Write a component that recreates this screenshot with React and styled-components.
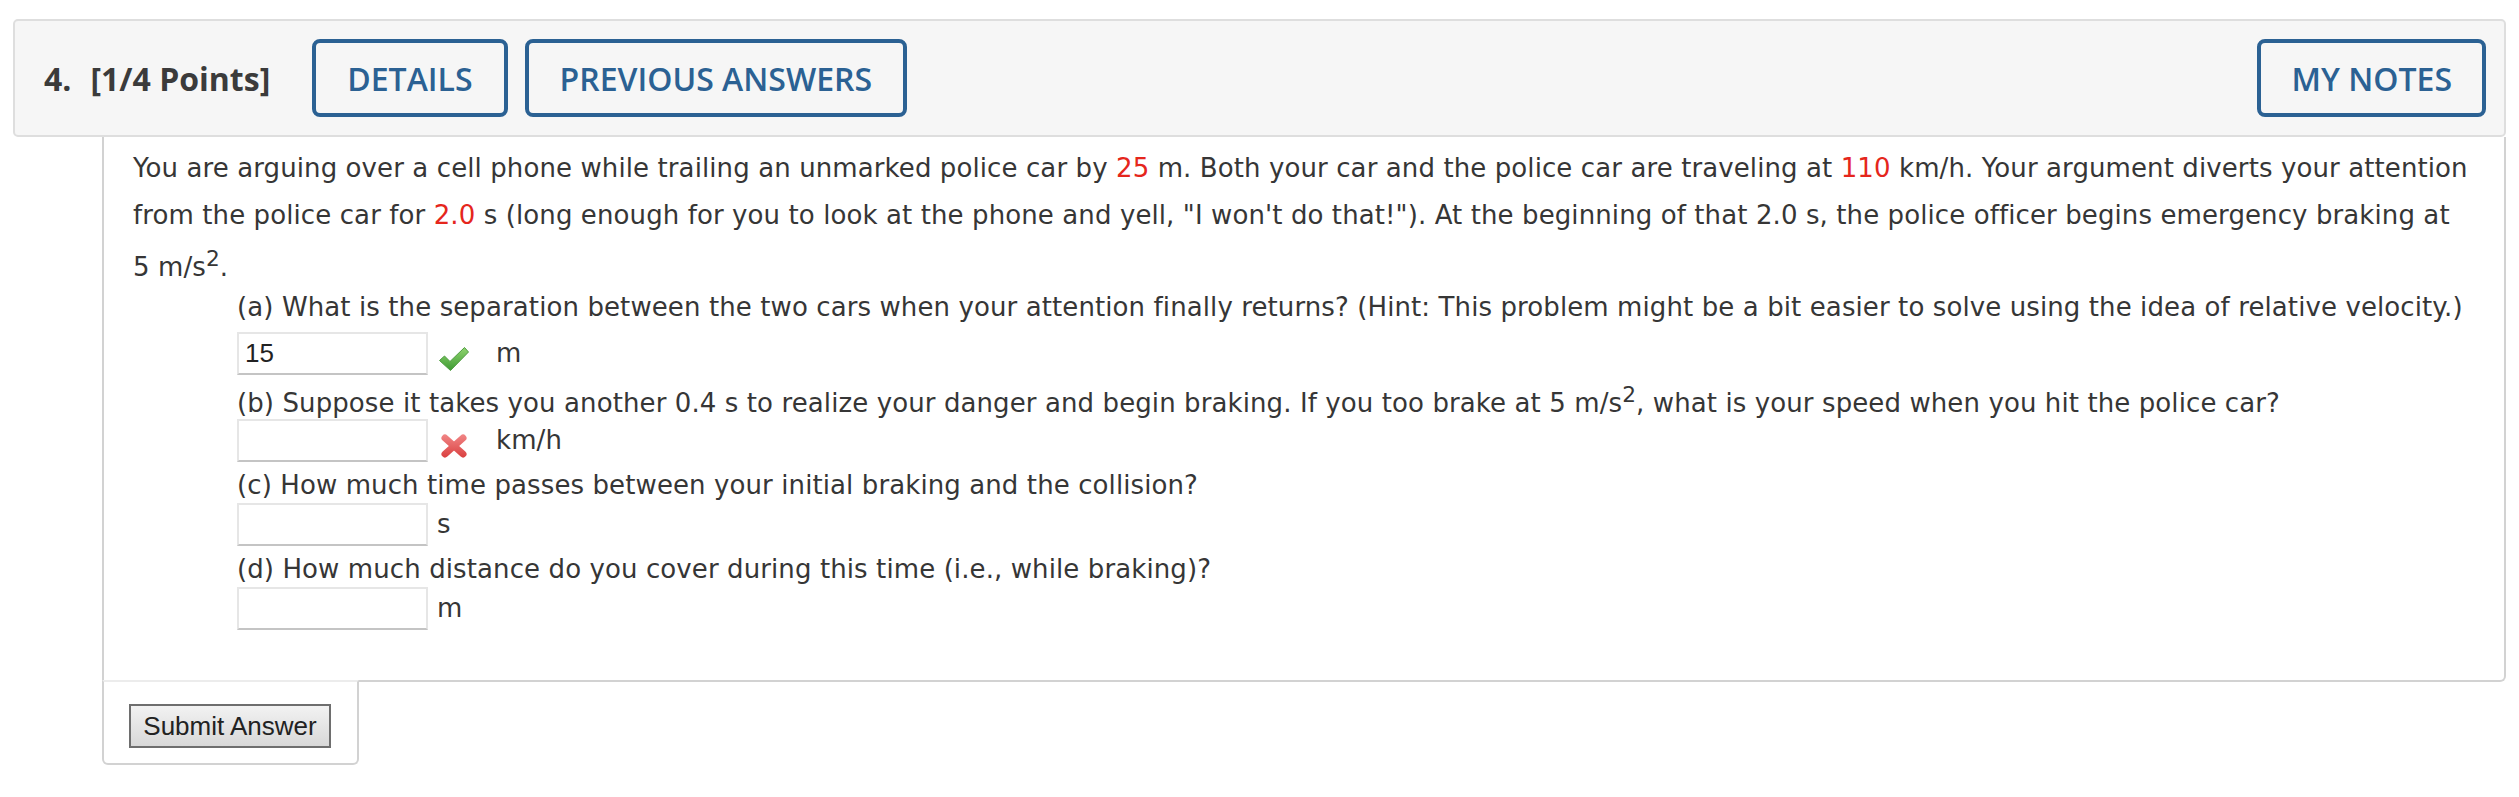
import React from 'react';
import styled, { createGlobalStyle } from 'styled-components';

const GlobalStyle = createGlobalStyle`
  html, body {
    margin: 0;
    padding: 0;
    background: #ffffff;
  }
  body {
    font-family: "DejaVu Sans", Verdana, sans-serif;
    color: #363636;
  }
`;

const Page = styled.div`
  padding: 19px 13px 0 13px;
`;

const Header = styled.div`
  display: flex;
  align-items: center;
  height: 118px;
  box-sizing: border-box;
  padding: 0 18px 0 29px;
  background: #f6f6f6;
  border: 2px solid #dedede;
  border-radius: 5px;
  font-family: "Open Sans", "Liberation Sans", sans-serif;
`;

const QNum = styled.span`
  font-size: 32px;
  font-weight: 700;
  color: #3b3b3b;
  margin-right: 19px;
`;

const Points = styled.span`
  font-size: 32px;
  font-weight: 700;
  color: #3b3b3b;
  margin-right: 42px;
`;

const HeaderButton = styled.button`
  height: 78px;
  box-sizing: border-box;
  padding: 0 ${(p) => p.$pad || 31}px;
  margin-right: ${(p) => p.$gap || 0}px;
  border: 4px solid #2b6193;
  border-radius: 8px;
  background: transparent;
  color: #2b6193;
  font-family: "Open Sans", "Liberation Sans", sans-serif;
  font-size: 32px;
  font-weight: 600;
  cursor: pointer;
`;

const Spacer = styled.div`
  flex: 1;
`;

const Body = styled.div`
  margin-left: 89px;
  border: 2px solid #d2d2d2;
  border-top: none;
  border-radius: 0 0 6px 0;
  padding: 8px 30px 50px 29px;
  font-size: 26px;
  letter-spacing: 0.1px;
`;

const Paragraph = styled.p`
  margin: 0;
  line-height: 1.8;
`;

const Red = styled.span`
  color: #e5261c;
`;

const Parts = styled.div`
  margin: 2px 0 0 104px;
`;

const Part = styled.div`
  margin-bottom: ${(p) => p.$after || 0}px;
`;

const PartText = styled.div`
  line-height: 1.2;
`;

const AnswerRow = styled.div`
  display: flex;
  align-items: center;
  height: 43px;
  margin-top: ${(p) => p.$top ?? 2}px;
  line-height: 1.2;
`;

const AnswerInput = styled.input`
  width: 191px;
  height: 43px;
  box-sizing: border-box;
  margin: 0;
  padding: 0 6px;
  border: 2px solid #e6e6e6;
  border-bottom-color: #c4c4c4;
  border-radius: 0;
  background: #fff;
  font-family: "Liberation Sans", Arial, sans-serif;
  font-size: 26px;
  color: #222;
  outline: none;
`;

const IconBox = styled.span`
  display: inline-flex;
  width: 32px;
  height: 26px;
  margin: 11px 26px 0 10px;
  align-items: center;
  justify-content: center;
`;

const Unit = styled.span`
  margin-left: ${(p) => (p.$afterIcon ? 0 : 9)}px;
`;

const SubmitBox = styled.div`
  margin: -2px 0 0 89px;
  width: 257px;
  box-sizing: border-box;
  border: 2px solid #d2d2d2;
  border-top-color: #ececec;
  border-radius: 0 0 6px 6px;
  padding: 22px 0 15px 25px;
`;

const SubmitButton = styled.button`
  width: 202px;
  height: 44px;
  box-sizing: border-box;
  padding: 0;
  border: 2px solid #6e6e6e;
  border-radius: 0;
  background: linear-gradient(#f2f2f2, #d8d8d8);
  color: #222;
  font-family: "Liberation Sans", Arial, sans-serif;
  font-size: 26px;
  cursor: pointer;
`;

const CheckIcon = () => (
  <svg width="32" height="26" viewBox="0 0 32 26">
    <defs>
      <linearGradient id="chk" x1="0" y1="0" x2="0" y2="1">
        <stop offset="0" stopColor="#8fd46f" />
        <stop offset="1" stopColor="#3e9a33" />
      </linearGradient>
    </defs>
    <path
      d="M1.5 14.5 L6.5 10 L12 15.5 L26.5 1.5 L30.5 6 L12.5 24.5 Z"
      fill="url(#chk)"
      stroke="#4f9d41"
      strokeWidth="1"
      strokeLinejoin="round"
    />
  </svg>
);

const CrossIcon = () => (
  <svg width="28" height="26" viewBox="0 0 28 26">
    <defs>
      <linearGradient id="crs" x1="0" y1="0" x2="0" y2="26" gradientUnits="userSpaceOnUse">
        <stop offset="0" stopColor="#f28a8a" />
        <stop offset="1" stopColor="#d93c3c" />
      </linearGradient>
    </defs>
    <g stroke="url(#crs)" strokeWidth="7" strokeLinecap="round">
      <line x1="5" y1="5" x2="23" y2="21" />
      <line x1="23" y1="5" x2="5" y2="21" />
    </g>
  </svg>
);

export default function App() {
  return (
    <>
      <GlobalStyle />
      <Page>
        <Header>
          <QNum>4.</QNum>
          <Points>[1/4 Points]</Points>
          <HeaderButton $gap={17}>DETAILS</HeaderButton>
          <HeaderButton>PREVIOUS ANSWERS</HeaderButton>
          <Spacer />
          <HeaderButton $pad={30}>MY NOTES</HeaderButton>
        </Header>
        <Body>
          <Paragraph>
            You are arguing over a cell phone while trailing an unmarked police car by <Red>25</Red> m.
            Both your car and the police car are traveling at <Red>110</Red> km/h. Your argument diverts
            your attention from the police car for <Red>2.0</Red> s (long enough for you to look at the
            phone and yell, "I won't do that!"). At the beginning of that 2.0 s, the police officer begins
            emergency braking at 5&nbsp;m/s<sup>2</sup>.
          </Paragraph>
          <Parts>
            <Part $after={7}>
              <PartText>
                (a) What is the separation between the two cars when your attention finally returns? (Hint:
                This problem might be a bit easier to solve using the idea of relative velocity.)
              </PartText>
              <AnswerRow $top={9}>
                <AnswerInput defaultValue="15" />
                <IconBox>
                  <CheckIcon />
                </IconBox>
                <Unit $afterIcon>m</Unit>
              </AnswerRow>
            </Part>
            <Part $after={8}>
              <PartText>
                (b) Suppose it takes you another 0.4 s to realize your danger and begin braking. If you too
                brake at 5 m/s<sup>2</sup>, what is your speed when you hit the police car?
              </PartText>
              <AnswerRow $top={0}>
                <AnswerInput />
                <IconBox>
                  <CrossIcon />
                </IconBox>
                <Unit $afterIcon>km/h</Unit>
              </AnswerRow>
            </Part>
            <Part $after={8}>
              <PartText>(c) How much time passes between your initial braking and the collision?</PartText>
              <AnswerRow>
                <AnswerInput />
                <Unit>s</Unit>
              </AnswerRow>
            </Part>
            <Part>
              <PartText>(d) How much distance do you cover during this time (i.e., while braking)?</PartText>
              <AnswerRow>
                <AnswerInput />
                <Unit>m</Unit>
              </AnswerRow>
            </Part>
          </Parts>
        </Body>
        <SubmitBox>
          <SubmitButton>Submit Answer</SubmitButton>
        </SubmitBox>
      </Page>
    </>
  );
}
